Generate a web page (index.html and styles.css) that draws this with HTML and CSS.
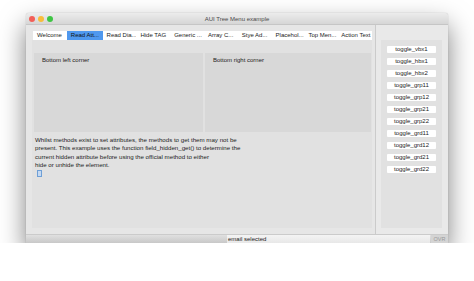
FILE: index.html
```html
<!DOCTYPE html>
<html lang="en">
  <head>
    <meta charset="UTF-8" />
    <title>AUI Tree Menu example</title>
    <link rel="stylesheet" href="styles.css">
  </head>
  <body>
    <div class="window">
      <div class="titlebar">
        <div class="lights">
          <span class="light red"></span>
          <span class="light yellow"></span>
          <span class="light green"></span>
        </div>
        <div class="title">AUI Tree Menu example</div>
      </div>

      <div class="main">
        <div class="left-pane">
          <ul class="tabs">
            <li class="tab w34">Welcome</li>
            <li class="tab w36 selected">Read Att...</li>
            <li class="tab w34">Read Dia...</li>
            <li class="tab w34">Hide TAG</li>
            <li class="tab w34">Generic ...</li>
            <li class="tab w34">Array C...</li>
            <li class="tab w34">Stye Ad...</li>
            <li class="tab w33">Placehol...</li>
            <li class="tab w33">Top Men...</li>
            <li class="tab w35">Action Text</li>
          </ul>
          <div class="page">
            <div class="corners">
              <div class="corner left">Bottom left corner</div>
              <div class="corner right">Bottom right corner</div>
            </div>
            <p class="info">
              Whilst methods exist to set attributes, the methods to get them may not be<br>
              present. This example uses the function field_hidden_get() to determine the<br>
              current hidden attribute before using the official method to either<br>
              hide or unhide the element.
            </p>
            <div class="caret"></div>
          </div>
        </div>

        <div class="right-pane">
          <div class="toggles">
            <button class="toggle">toggle_vbx1</button>
            <button class="toggle">toggle_hbx1</button>
            <button class="toggle">toggle_hbx2</button>
            <button class="toggle">toggle_grp11</button>
            <button class="toggle">toggle_grp12</button>
            <button class="toggle">toggle_grp21</button>
            <button class="toggle">toggle_grp22</button>
            <button class="toggle">toggle_grd11</button>
            <button class="toggle">toggle_grd12</button>
            <button class="toggle">toggle_grd21</button>
            <button class="toggle">toggle_grd22</button>
          </div>
        </div>
      </div>

      <div class="statusbar">
        <div class="status-left"></div>
        <div class="status-text">email selected</div>
        <div class="status-ovr">OVR</div>
      </div>
    </div>
  </body>
</html>
```

FILE: styles.css
```css
/* AUI tree menu window */

body {
  margin: 0;
  padding: 0;
  background-color: #fff;
  font-family: "Liberation Sans", Arial, sans-serif;
  color: #222;
}

.window {
  width: 422px;
  height: 230px;
  margin: 13px 0 0 26px;
  display: flex;
  flex-direction: column;
  background-color: #e6e6e6;
  border-radius: 3px 3px 0 0;
  box-shadow: 0 12px 26px rgba(0, 0, 0, 0.5), 0 0 1px rgba(0, 0, 0, 0.35);
  overflow: hidden;
}

.titlebar {
  height: 12px;
  display: flex;
  align-items: center;
  background: linear-gradient(#ececec, #d6d6d6);
  border-bottom: 1px solid #c6c6c6;
  box-sizing: border-box;
}

.lights {
  display: flex;
  gap: 3px;
  margin-left: 3px;
}

.light {
  width: 6px;
  height: 6px;
  border-radius: 50%;
}

.red { background-color: #f25f58; }
.yellow { background-color: #f8bd3b; }
.green { background-color: #3ec544; }

.title {
  flex: 1;
  text-align: center;
  font-size: 6px;
  color: #4a4a4a;
  margin-right: 27px;
}

.main {
  flex: 1;
  display: flex;
}

.left-pane {
  width: 350px;
  display: flex;
  flex-direction: column;
  padding: 6px 3px 6px 6px;
  box-sizing: border-box;
  border-right: 1px solid #cbcbcb;
}

.tabs {
  list-style: none;
  display: flex;
  margin: 0 0 0 1px;
  padding: 0;
  height: 9px;
  background-color: #fff;
}

.tab {
  font-size: 6px;
  line-height: 9px;
  padding-left: 4px;
  box-sizing: border-box;
  white-space: nowrap;
  overflow: hidden;
}

.tab.selected {
  background-color: #4f98ee;
  color: #111;
}

.w33 { width: 33px; }
.w34 { width: 34px; }
.w35 { width: 35px; }
.w36 { width: 36px; }

.page {
  flex: 1;
  background-color: #e1e1e1;
  padding: 13px 1px 0 2px;
}

.corners {
  display: flex;
  gap: 2px;
  height: 79px;
}

.corner {
  background-color: #d8d8d8;
  font-size: 6px;
  padding: 4px 0 0 8px;
  box-sizing: border-box;
}

.corner.left { width: 169px; }
.corner.right { flex: 1; }

.info {
  margin: 4px 0 0 1px;
  font-size: 6.15px;
  line-height: 8.3px;
  white-space: nowrap;
}

.caret {
  width: 3px;
  height: 5px;
  margin: 1px 0 0 3px;
  background-color: #c5d9f2;
  border: 1px solid #6e9fd6;
}

.right-pane {
  flex: 1;
  padding: 15px 6px 6px 5px;
  background-color: #e9e9e9;
}

.toggles {
  height: 100%;
  background-color: #e1e1e1;
  display: flex;
  flex-direction: column;
  align-items: center;
  gap: 5px;
  padding-top: 6px;
  box-sizing: border-box;
}

.toggle {
  width: 49px;
  height: 7px;
  padding: 0;
  border: none;
  border-radius: 1px;
  background-color: #fff;
  font-family: "Liberation Sans", Arial, sans-serif;
  font-size: 6px;
  line-height: 7px;
  color: #222;
}

.statusbar {
  height: 8px;
  display: flex;
  background: linear-gradient(#e0e0e0, #c8c8c8);
  border-top: 1px solid #cbcbcb;
}

.status-left {
  width: 201px;
}

.status-text {
  flex: 1;
  font-size: 6px;
  line-height: 8px;
  padding-left: 1px;
  background: linear-gradient(#f4f4f4, #e8e8e8);
}

.status-ovr {
  width: 17px;
  font-size: 5.5px;
  line-height: 8px;
  text-align: center;
  color: #999;
  background-color: #d4d4d4;
  margin-left: 1px;
}
```
